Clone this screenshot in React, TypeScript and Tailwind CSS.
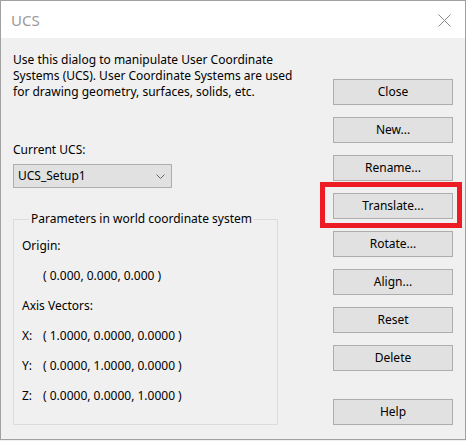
import React from "react";

function WinButton({ label, highlight = false, className = "" }: { label: string; highlight?: boolean; className?: string }) {
  return (
    <div className={"relative " + className}>
      <button className="w-full h-[26px] bg-[#e1e1e1] border border-[#adadad] text-[12px] leading-[16px] text-black flex items-center justify-center">
        {label}
      </button>
      {highlight && (
        <div className="absolute left-[-13px] top-[-11px] right-[-9px] bottom-[-9px] border-[5px] border-[#ed1c24] pointer-events-none" />
      )}
    </div>
  );
}

export default function App() {
  return (
    <div className="w-[466px] h-[441px] bg-[#f0f0f0] font-['Noto_Sans',sans-serif]">
      <div className="w-[466px] h-[440px] border border-[#a0a0a0] flex flex-col">
        {/* Title bar */}
        <div className="h-[37px] bg-white flex items-center justify-between pl-[10px] pr-[14px] shrink-0">
          <span className="text-[15px] text-[#9a9a9a] leading-[20px]">UCS</span>
          <svg width="13" height="13" viewBox="0 0 13 13" className="mt-[1px]">
            <path d="M0.5 0.5 L12.5 12.5 M12.5 0.5 L0.5 12.5" stroke="#8a8a8a" strokeWidth="1" fill="none" />
          </svg>
        </div>
        {/* Body */}
        <div className="flex-1 flex text-[12px] leading-[16px] text-black">
          <div className="flex-1 pl-[12px] pt-[14px] flex flex-col">
            <p>
              Use this dialog to manipulate User Coordinate
              <br />
              Systems (UCS). User Coordinate Systems are used
              <br />
              for drawing geometry, surfaces, solids, etc.
            </p>
            <div className="mt-[42px]">Current UCS:</div>
            <div className="mt-[6px] w-[159px] h-[24px] bg-[#e1e1e1] border border-[#adadad] flex items-center justify-between pl-[4px] pr-[6px]">
              <span>UCS_Setup1</span>
              <svg width="9" height="5" viewBox="0 0 9 5">
                <path d="M0.5 0.5 L4.5 4.5 L8.5 0.5" stroke="#6a6a6a" strokeWidth="1" fill="none" />
              </svg>
            </div>
            <fieldset className="mt-[23px] w-[265px] h-[214px] border border-[#dcdcdc] pl-[8px] pt-[11px]">
              <legend className="ml-[7px] px-[2px]">Parameters in world coordinate system</legend>
              <div className="flex flex-col gap-[14px]">
                <div>Origin:</div>
                <div className="pl-[21px]">( 0.000, 0.000, 0.000 )</div>
                <div>Axis Vectors:</div>
                <div className="flex"><span className="w-[21px]">X:</span><span>( 1.0000, 0.0000, 0.0000 )</span></div>
                <div className="flex"><span className="w-[21px]">Y:</span><span>( 0.0000, 1.0000, 0.0000 )</span></div>
                <div className="flex"><span className="w-[21px]">Z:</span><span>( 0.0000, 0.0000, 1.0000 )</span></div>
              </div>
            </fieldset>
          </div>
          <div className="w-[120px] mr-[12px] pt-[41px] flex flex-col gap-[12px]">
            <WinButton label="Close" />
            <WinButton label="New..." />
            <WinButton label="Rename..." />
            <WinButton label="Translate..." highlight />
            <WinButton label="Rotate..." />
            <WinButton label="Align..." />
            <WinButton label="Reset" />
            <WinButton label="Delete" />
            <WinButton label="Help" className="mt-[16px]" />
          </div>
        </div>
      </div>
    </div>
  );
}
